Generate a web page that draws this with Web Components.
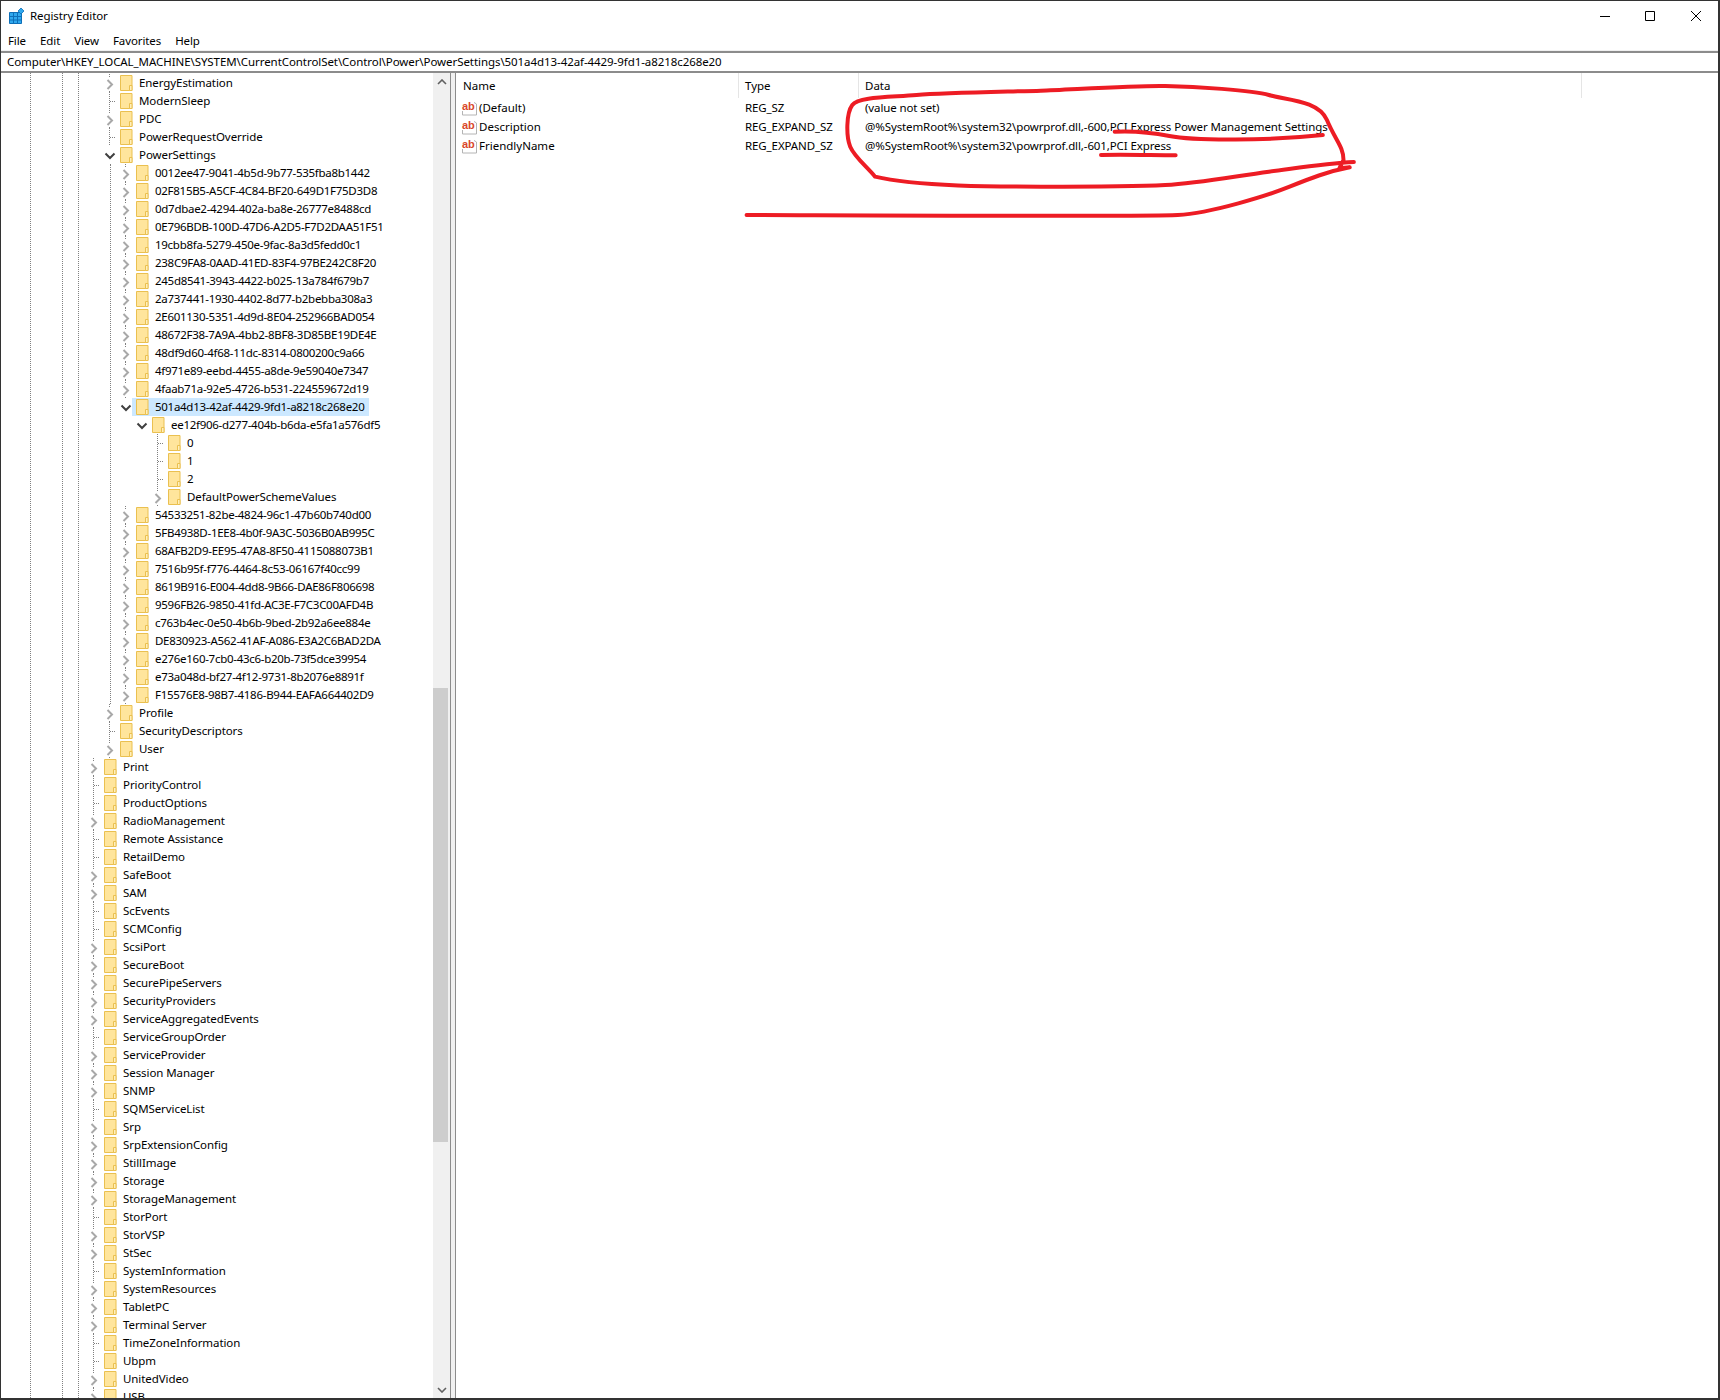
<!DOCTYPE html>
<html>
<head>
<meta charset="utf-8">
<title>Registry Editor</title>
<style>
html, body { margin: 0; padding: 0; background: #fff; }
body { font: 11.5px "Noto Sans", "Open Sans", sans-serif; color: #000; }
</style>
</head>
<body>
<regedit-window>
  <title-bar slot="title">Registry Editor</title-bar>
  <menu-bar slot="menu" items="File,Edit,View,Favorites,Help"></menu-bar>
  <address-bar slot="address">Computer\HKEY_LOCAL_MACHINE\SYSTEM\CurrentControlSet\Control\Power\PowerSettings\501a4d13-42af-4429-9fd1-a8218c268e20</address-bar>
  <key-tree slot="tree"></key-tree>
  <value-list slot="list"></value-list>
</regedit-window>

<script>
const FOLDER = `<svg width="13" height="16" viewBox="0 0 13 16" style="display:block"><path d="M.5.5h11.5v15H.5z" fill="#ffe59c" stroke="#eac050"/><path d="M9.5 15.5v-5h2.5v5z" fill="#fff0bd" stroke="#eac050"/></svg>`;
const AB = `<svg width="17" height="17" viewBox="0 0 17 17" style="flex:none"><path d="M1.5 2.5h10l4 2.5v11h-14z" fill="#fff" stroke="#b4b4b4"/><rect x="1" y="1" width="12" height="11" fill="#fff"/><text x="1" y="10.5" font-family="Liberation Sans" font-size="11" font-weight="700" fill="#d9482b">ab</text></svg>`;

class RegeditWindow extends HTMLElement {
  constructor() {
    super();
    this.attachShadow({mode: 'open'}).innerHTML = `
    <style>
    :host { display: flex; flex-direction: column; position: relative; box-sizing: border-box; width: 1720px; height: 1400px;
      border: 1px solid #333; border-right-width: 2px; border-bottom-width: 2px; background: #fff; overflow: hidden; }
    .panes { flex: 1; display: flex; min-height: 0; }
    .left { width: 449px; flex: none; overflow: hidden; }
    .split { width: 6px; box-sizing: border-box; flex: none; background: #f0f0f0; border-left: 1px solid #8c8c8c; border-right: 1px solid #8c8c8c; }
    .right { flex: 1; min-width: 0; }
    </style>
    <slot name="title"></slot>
    <slot name="menu"></slot>
    <slot name="address"></slot>
    <div class="panes">
      <div class="left"><slot name="tree"></slot></div>
      <div class="split"></div>
      <div class="right"><slot name="list"></slot></div>
    </div>`;
  }
}

class TitleBar extends HTMLElement {
  constructor() {
    super();
    this.attachShadow({mode: 'open'}).innerHTML = `
    <style>
    :host { display: flex; align-items: center; height: 29px; padding-left: 8px; }
    .ico { margin-right: 6px; }
    .t { flex: 1; letter-spacing: -.1px; }
    .btn { width: 46px; height: 29px; display: flex; align-items: center; justify-content: center; }
    .btn.min { margin-right: -1px; }
    .btn.close { margin-right: -1px; }
    </style>
    <svg class="ico" width="15" height="16" viewBox="0 0 15 16">
      <path d="M.5 4.5h12v11H.5z" fill="#2fa8ee" stroke="#0d6fb8"/>
      <path d="M4.5 4v11M8.5 4v11M1 8.5h11M1 12h11" stroke="#0d6fb8" fill="none"/>
      <path d="M12 0l3 3-3 3-3-3z" fill="#2fa8ee" stroke="#0d6fb8" stroke-width=".8"/>
    </svg>
    <div class="t"><slot></slot></div>
    <div class="btn min"><svg width="10" height="10"><path d="M0 5.5h10" stroke="#000"/></svg></div>
    <div class="btn"><svg width="10" height="10"><path d="M.5.5h9v9h-9z" fill="none" stroke="#000"/></svg></div>
    <div class="btn close"><svg width="10" height="10"><path d="M0 0l10 10M10 0L0 10" stroke="#000"/></svg></div>`;
  }
}

class MenuBar extends HTMLElement {
  constructor() {
    super();
    this.attachShadow({mode: 'open'}).innerHTML = `
    <style>
    :host { display: flex; height: 21px; box-sizing: border-box; border-bottom: 1px solid #f0f0f0; align-items: center; padding-left: 7px; gap: 14px; letter-spacing: -.1px; }
    </style>`;
    this.getAttribute('items').split(',').forEach(m => {
      const s = document.createElement('span');
      s.textContent = m;
      this.shadowRoot.appendChild(s);
    });
  }
}

class AddressBar extends HTMLElement {
  constructor() {
    super();
    this.attachShadow({mode: 'open'}).innerHTML = `
    <style>
    :host { display: flex; align-items: center; height: 17px; padding: 0 0 1px 6px; letter-spacing: -.07px;
      border-top: 2px solid #8c8c8c; border-bottom: 2px solid #8c8c8c; white-space: nowrap; }
    </style>
    <slot></slot>`;
  }
}

// [label, level, state]  state: c closed, o open, l leaf
const TREE = [
  ['EnergyEstimation',2,'c'],['ModernSleep',2,'l'],['PDC',2,'c'],['PowerRequestOverride',2,'l'],['PowerSettings',2,'o'],
  ['0012ee47-9041-4b5d-9b77-535fba8b1442',3,'c'],['02F815B5-A5CF-4C84-BF20-649D1F75D3D8',3,'c'],
  ['0d7dbae2-4294-402a-ba8e-26777e8488cd',3,'c'],['0E796BDB-100D-47D6-A2D5-F7D2DAA51F51',3,'c'],
  ['19cbb8fa-5279-450e-9fac-8a3d5fedd0c1',3,'c'],['238C9FA8-0AAD-41ED-83F4-97BE242C8F20',3,'c'],
  ['245d8541-3943-4422-b025-13a784f679b7',3,'c'],['2a737441-1930-4402-8d77-b2bebba308a3',3,'c'],
  ['2E601130-5351-4d9d-8E04-252966BAD054',3,'c'],['48672F38-7A9A-4bb2-8BF8-3D85BE19DE4E',3,'c'],
  ['48df9d60-4f68-11dc-8314-0800200c9a66',3,'c'],['4f971e89-eebd-4455-a8de-9e59040e7347',3,'c'],
  ['4faab71a-92e5-4726-b531-224559672d19',3,'c'],['501a4d13-42af-4429-9fd1-a8218c268e20',3,'o','sel'],
  ['ee12f906-d277-404b-b6da-e5fa1a576df5',4,'o'],['0',5,'l'],['1',5,'l'],['2',5,'l'],['DefaultPowerSchemeValues',5,'c'],
  ['54533251-82be-4824-96c1-47b60b740d00',3,'c'],['5FB4938D-1EE8-4b0f-9A3C-5036B0AB995C',3,'c'],
  ['68AFB2D9-EE95-47A8-8F50-4115088073B1',3,'c'],['7516b95f-f776-4464-8c53-06167f40cc99',3,'c'],
  ['8619B916-E004-4dd8-9B66-DAE86F806698',3,'c'],['9596FB26-9850-41fd-AC3E-F7C3C00AFD4B',3,'c'],
  ['c763b4ec-0e50-4b6b-9bed-2b92a6ee884e',3,'c'],['DE830923-A562-41AF-A086-E3A2C6BAD2DA',3,'c'],
  ['e276e160-7cb0-43c6-b20b-73f5dce39954',3,'c'],['e73a048d-bf27-4f12-9731-8b2076e8891f',3,'c'],
  ['F15576E8-98B7-4186-B944-EAFA664402D9',3,'c'],
  ['Profile',2,'c'],['SecurityDescriptors',2,'l'],['User',2,'c'],
  ['Print',1,'c'],['PriorityControl',1,'l'],['ProductOptions',1,'l'],['RadioManagement',1,'c'],['Remote Assistance',1,'l'],
  ['RetailDemo',1,'l'],['SafeBoot',1,'c'],['SAM',1,'c'],['ScEvents',1,'l'],['SCMConfig',1,'l'],['ScsiPort',1,'c'],
  ['SecureBoot',1,'c'],['SecurePipeServers',1,'c'],['SecurityProviders',1,'c'],['ServiceAggregatedEvents',1,'c'],
  ['ServiceGroupOrder',1,'l'],['ServiceProvider',1,'c'],['Session Manager',1,'c'],['SNMP',1,'c'],['SQMServiceList',1,'l'],
  ['Srp',1,'c'],['SrpExtensionConfig',1,'c'],['StillImage',1,'c'],['Storage',1,'c'],['StorageManagement',1,'c'],
  ['StorPort',1,'l'],['StorVSP',1,'c'],['StSec',1,'c'],['SystemInformation',1,'l'],['SystemResources',1,'c'],
  ['TabletPC',1,'c'],['Terminal Server',1,'c'],['TimeZoneInformation',1,'l'],['Ubpm',1,'l'],['UnitedVideo',1,'c'],['USB',1,'c']
];

class TreeRow extends HTMLElement {
  static tpl = (() => {
    const t = document.createElement('template');
    t.innerHTML = `
    <style>
    :host { display: flex; align-items: center; height: 18px; white-space: nowrap; position: relative; letter-spacing: -.08px; }
    :host([guid]) { letter-spacing: -.28px; }
    .exp { width: 18px; height: 18px; flex: none; }
    .folder { width: 13px; height: 16px; flex: none; padding-right: 6px; }
    .label { padding-right: 5px; line-height: 18px; }
    :host([sel]) .label, :host([sel]) .folder { background: #cce8ff; }
    :host([sel]) .folder { padding: 1px 6px 1px 4px; margin-left: -4px; }
    </style>
    <svg class="exp" viewBox="0 0 18 18"></svg>
    <span class="folder">${FOLDER}</span>
    <span class="label"><slot></slot></span>`;
    return t;
  })();
  constructor() {
    super();
    this.attachShadow({mode: 'open'}).appendChild(TreeRow.tpl.content.cloneNode(true));
  }
  connectedCallback() {
    const st = this.getAttribute('state');
    const exp = this.shadowRoot.querySelector('.exp');
    const dots = 'fill="none" stroke="#808080" stroke-dasharray="1 1"';
    if (st == 'c') exp.innerHTML = `<path d="M7.5 0v3M7.5 17v1" ${dots}/><path d="M5.5 6l4.5 4.5-4.5 4.5" fill="none" stroke="#a8a8a8" stroke-width="2"/>`;
    if (st == 'o') exp.innerHTML = `<path d="M3.5 7.5l4.5 4.5 4.5-4.5" fill="none" stroke="#404040" stroke-width="2"/>`;
    if (st == 'l') exp.innerHTML = `<path d="M8 9.5h6" ${dots}/><path d="M7.5 0v18" ${dots}/>`;
  }
}

class KeyTree extends HTMLElement {
  constructor() {
    super();
    this.attachShadow({mode: 'open'}).innerHTML = `
    <style>
    :host { display: flex; height: 100%; background: #fff; position: relative; }
    .rows { flex: 1; min-width: 0; overflow: hidden; padding-top: 1px; position: relative; }
    .guide { position: absolute; top: 0; bottom: 0; width: 0; border-left: 1px dotted #808080; }
    .bar { width: 17px; flex: none; display: flex; flex-direction: column; background: #f0f0f0; }
    .arrow { height: 17px; display: flex; align-items: center; justify-content: center; flex: none; }
    .track { flex: 1; display: flex; flex-direction: column; }
    .gap { height: 598px; }
    .thumb { height: 454px; background: #cdcdcd; margin-right: 2px; }
    </style>
    <div class="rows">
      <div class="guide" style="left:29px"></div>
      <div class="guide" style="left:61px"></div>
      <div class="guide" style="left:77px"></div>
      <div class="guide" style="left:109px;top:91px;bottom:auto;height:540px"></div>
    </div>
    <div class="bar">
      <div class="arrow"><svg width="10" height="6"><path d="M1 5l4-4 4 4" fill="none" stroke="#606060" stroke-width="1.6"/></svg></div>
      <div class="track"><div class="gap"></div><div class="thumb"></div></div>
      <div class="arrow"><svg width="10" height="6"><path d="M1 1l4 4 4-4" fill="none" stroke="#606060" stroke-width="1.6"/></svg></div>
    </div>`;
    const rows = this.shadowRoot.querySelector('.rows');
    TREE.forEach(([label, lvl, st, sel]) => {
      const r = document.createElement('tree-row');
      r.textContent = label;
      r.setAttribute('state', st);
      if (sel) r.setAttribute('sel', '');
      if (label.length == 36) r.setAttribute('guid', '');
      r.style.paddingLeft = (85 + (lvl - 1) * 16) + 'px';
      rows.appendChild(r);
    });
  }
}

class ValueList extends HTMLElement {
  constructor() {
    super();
    this.attachShadow({mode: 'open'}).innerHTML = `
    <style>
    :host { display: block; height: 100%; position: relative; }
    .head, .row { display: grid; grid-template-columns: 283px 120px 1fr; }
    .head { height: 25px; align-items: center; }
    .head div { height: 25px; line-height: 25px; padding-left: 6px; border-right: 1px solid #e5e5e5; box-sizing: border-box; }
    .head div:first-child { padding-left: 7px; }
    .head div:last-child { width: 723px; }
    .row { height: 19px; align-items: center; white-space: nowrap; }
    .row > div { padding-left: 6px; }
    .row > div:first-child { display: flex; align-items: center; gap: 1px; padding-left: 5px; }
    .row > div:nth-child(2) { letter-spacing: -.1px; }
    .row > div:last-child { letter-spacing: -.11px; }
    .ink { position: absolute; left: 274px; top: -3px; width: 650px; height: 170px; overflow: visible; pointer-events: none; }
    .ink path { vector-effect: non-scaling-stroke; }
    </style>
    <div class="head"><div>Name</div><div>Type</div><div>Data</div></div>
    <div class="row"><div>${AB}<span>(Default)</span></div><div>REG_SZ</div><div>(value not set)</div></div>
    <div class="row"><div>${AB}<span>Description</span></div><div>REG_EXPAND_SZ</div><div>@%SystemRoot%\\system32\\powrprof.dll,-600,PCI Express Power Management Settings</div></div>
    <div class="row"><div>${AB}<span>FriendlyName</span></div><div>REG_EXPAND_SZ</div><div>@%SystemRoot%\\system32\\powrprof.dll,-601,PCI Express</div></div>
    <svg class="ink" viewBox="0 0 1568 510" preserveAspectRatio="none" fill="none" stroke="#ed1c24" stroke-width="4" stroke-linecap="round" stroke-linejoin="round">
      <path d="M1505 276C1440 280 1380 292 1300 305S1130 340 1050 345 850 350 750 350 450 350 350 320C330 290 300 260 290 230S280 130 295 105 380 82 450 75 680 65 750 62 980 46 1050 48 1260 60 1300 75 1420 90 1440 150 1480 230 1480 270L1470 295 1495 292C1440 305 1400 325 1350 350S1160 430 1080 435 500 437 40 435"/>
      <path d="M928 185C960 183 1000 183 1060 198S1300 212 1430 195"/>
      <path d="M895 255C960 253 1020 256 1075 256"/>
    </svg>`;
  }
}

customElements.define('tree-row', TreeRow);
customElements.define('key-tree', KeyTree);
customElements.define('title-bar', TitleBar);
customElements.define('menu-bar', MenuBar);
customElements.define('address-bar', AddressBar);
customElements.define('value-list', ValueList);
customElements.define('regedit-window', RegeditWindow);
</script>
</body>
</html>
